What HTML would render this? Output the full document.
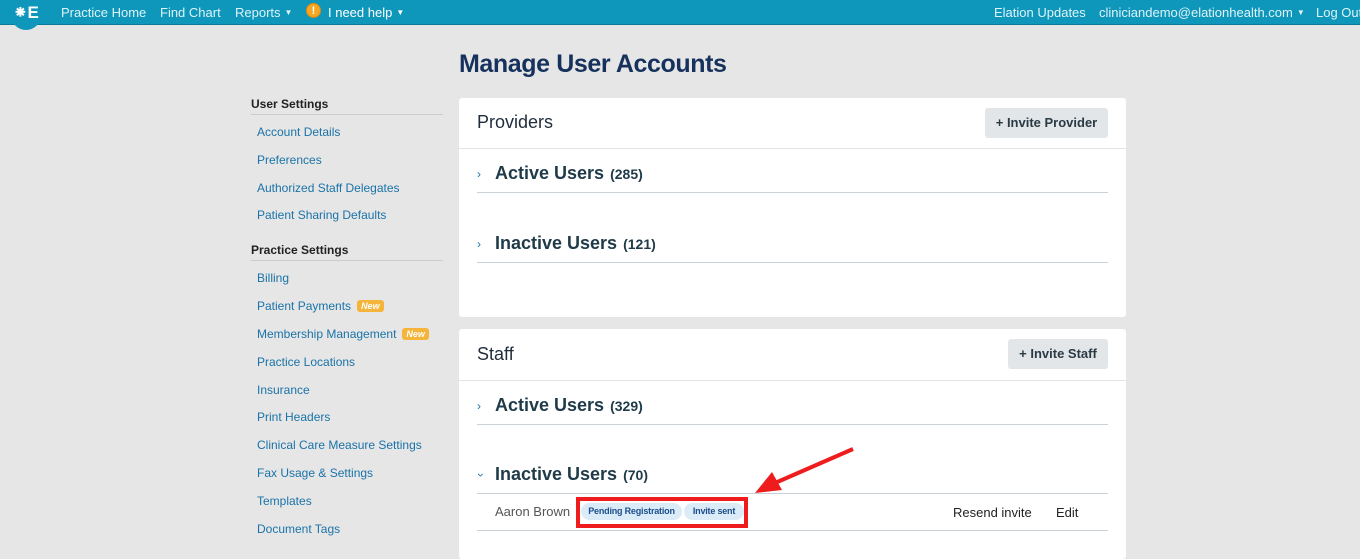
<!DOCTYPE html>
<html><head><meta charset="utf-8"><style>
*{margin:0;padding:0;box-sizing:border-box}
body{width:1360px;height:541px;overflow:hidden;background:#e6e6e6;font-family:"Liberation Sans",sans-serif;position:relative}
.nav{position:absolute;left:0;top:0;width:1360px;height:25px;background:#0e97bb;border-bottom:1px solid #0a7d9b;color:#dff3f8;font-size:13px;white-space:nowrap}
.nav span{position:absolute;top:5px;white-space:nowrap}
.logo{position:absolute;left:11px;top:-8px;width:30px;height:38px;border-radius:0 0 15px 15px;background:#0e97bb;color:#fff;font-weight:bold;font-size:17px;text-align:center;padding-top:11px}
.car{font-size:8px;margin-left:4px;vertical-align:2px}
h1{position:absolute;left:459px;top:50px;font-size:25px;color:#16325c;font-weight:bold;letter-spacing:-.4px}
.sh{position:absolute;left:251px;width:192px;font-size:12px;font-weight:bold;color:#222;border-bottom:1px solid #ccc;padding-bottom:3px}
.sl{position:absolute;left:257px;font-size:12px;color:#1a73a8}
.new{display:inline-block;background:#f5b43a;color:#fff;font-size:9px;font-style:italic;font-weight:bold;border-radius:3px;padding:1px 4px;margin-left:6px;vertical-align:1px}
.card{position:absolute;left:459px;width:667px;background:#fff;border-radius:3px}
.ct{position:absolute;left:18px;font-size:18px;color:#1f2d3d}
.btn{position:absolute;background:#e3e6e8;border-radius:3px;font-size:13px;font-weight:bold;color:#2a3a44;text-align:center;line-height:30px;height:30px}
.hr{position:absolute;left:0;width:667px;height:1px;background:#e4e4e4}
.sec{position:absolute;left:18px;width:631px;border-bottom:1px solid #c9d1d6;height:30px}
.sec b{position:absolute;left:18px;top:0;font-size:18px;color:#1f3a48;font-weight:bold}
.sec i{position:absolute;left:0;top:4px;font-style:normal;color:#1a73a8;font-size:12px}
.sec em{font-style:normal;font-size:14px;margin-left:6px}
.pill{display:inline-block;background:#dcebf8;color:#1a4e8a;font-size:9px;font-weight:bold;border-radius:9px;height:17px;line-height:17px;text-align:center;letter-spacing:-.2px;vertical-align:top}
</style></head><body>
<div class="nav">
<div class="logo">⁕E</div>
<span style="left:61px">Practice Home</span>
<span style="left:160px">Find Chart</span>
<span style="left:235px">Reports<b class="car">▼</b></span>
<span style="left:306px;top:3px;width:15px;height:15px;border-radius:50%;background:#f5a623;color:#fff;font-weight:bold;font-size:11px;text-align:center;line-height:15px;border:1px solid #e08a10">!</span>
<span style="left:328px;color:#fff">I need help<b class="car">▼</b></span>
<span style="left:994px">Elation Updates</span>
<span style="left:1099px">cliniciandemo@elationhealth.com<b class="car">▼</b></span>
<span style="left:1316px">Log Out</span>
</div>
<h1>Manage User Accounts</h1>
<div class="sh" style="top:97px">User Settings</div>
<div class="sl" style="top:125px">Account Details</div>
<div class="sl" style="top:153px">Preferences</div>
<div class="sl" style="top:181px">Authorized Staff Delegates</div>
<div class="sl" style="top:208px">Patient Sharing Defaults</div>
<div class="sh" style="top:243px">Practice Settings</div>
<div class="sl" style="top:271px">Billing</div>
<div class="sl" style="top:299px">Patient Payments<span class="new">New</span></div>
<div class="sl" style="top:327px">Membership Management<span class="new">New</span></div>
<div class="sl" style="top:355px">Practice Locations</div>
<div class="sl" style="top:383px">Insurance</div>
<div class="sl" style="top:410px">Print Headers</div>
<div class="sl" style="top:438px">Clinical Care Measure Settings</div>
<div class="sl" style="top:466px">Fax Usage &amp; Settings</div>
<div class="sl" style="top:494px">Templates</div>
<div class="sl" style="top:522px">Document Tags</div>

<div class="card" style="top:98px;height:219px">
<div class="ct" style="top:14px">Providers</div>
<div class="btn" style="left:526px;top:10px;width:123px">+ Invite Provider</div>
<div class="hr" style="top:50px"></div>
<div class="sec" style="top:65px"><i>›</i><b>Active Users<em>(285)</em></b></div>
<div class="sec" style="top:135px"><i>›</i><b>Inactive Users<em>(121)</em></b></div>
</div>
<div class="card" style="top:329px;height:230px">
<div class="ct" style="top:15px">Staff</div>
<div class="btn" style="left:549px;top:10px;width:100px">+ Invite Staff</div>
<div class="hr" style="top:51px"></div>
<div class="sec" style="top:66px"><i>›</i><b>Active Users<em>(329)</em></b></div>
<div class="sec" style="top:135px"><i style="transform:rotate(90deg);left:2px">›</i><b>Inactive Users<em>(70)</em></b></div>
<div class="sec" style="top:165px;height:37px">
<span style="position:absolute;left:18px;top:10px;font-size:13px;color:#555">Aaron Brown</span>
<span style="position:absolute;left:476px;top:11px;font-size:13px;color:#222">Resend invite</span>
<span style="position:absolute;left:579px;top:11px;font-size:13px;color:#222">Edit</span>
</div>
</div>
<div style="position:absolute;left:576px;top:497px;width:172px;height:31px;border:4px solid #ee1c1c;padding:2px 0 0 1px;white-space:nowrap;font-size:0"><span class="pill" style="width:101px">Pending Registration</span><span class="pill" style="width:60px;margin-left:2px">Invite sent</span></div>
<svg style="position:absolute;left:750px;top:445px" width="110" height="55"><line x1="103" y1="4" x2="25" y2="38" stroke="#ee1c1c" stroke-width="4"/><polygon points="5,48 22,27 32,45" fill="#ee1c1c"/></svg>
</body></html>
